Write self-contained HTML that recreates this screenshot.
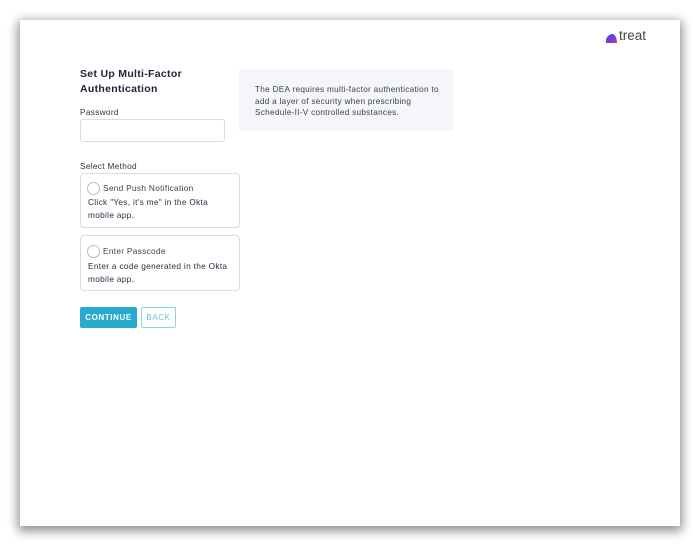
<!DOCTYPE html>
<html><head><style>
body{margin:0;width:700px;height:546px;background:#fff;position:relative;overflow:hidden;font-family:"Liberation Sans",sans-serif;color:#2a2f45}
.panel{position:absolute;left:20px;top:20px;width:660px;height:506px;background:#fff;box-shadow:0 3px 10px 2px rgba(0,0,0,.45)}
.a{position:absolute}
h1{position:absolute;left:80px;top:67px;margin:0;font-size:10.5px;line-height:15px;font-weight:bold;color:#1e2235;width:140px;letter-spacing:.3px}
.lbl{font-size:8.3px;color:#333;letter-spacing:.3px}
.inp{left:80px;top:119px;width:143px;height:21px;border:1px solid #d8dbe0;border-radius:3px}
.card{left:80px;width:158px;border:1px solid #d8dbe0;border-radius:4px;font-size:8.3px;line-height:13px;color:#2a2f45;letter-spacing:.3px}
.radio{position:absolute;left:6px;width:11px;height:11px;border:1px solid #bbb;border-radius:50%}
.info{left:239px;top:69px;width:215px;height:62px;background:#f5f6fa;border-radius:2px;font-size:8.2px;line-height:11.5px;color:#3b4050;letter-spacing:.3px}
.btn{top:307px;height:21px;font-size:8px;font-weight:bold;letter-spacing:.6px;line-height:21px;text-align:center;border-radius:2px}
</style></head><body>
<div class="panel"></div>
<div class="a" style="left:605px;top:32px;width:13px;height:12px">
<svg width="13" height="12" viewBox="0 0 13 12"><defs><linearGradient id="g" x1="0" y1="0" x2="1" y2="1"><stop offset="0" stop-color="#2f5cd6"/><stop offset="0.6" stop-color="#7a3ad9"/><stop offset="1" stop-color="#e0368f"/></linearGradient></defs><path d="M1 10 C0 5 4 1 7 1 C10 1 12 5 12 10 Z" fill="url(#g)"/></svg></div>
<div class="a" style="left:619px;top:28px;font-size:13.5px;color:#444">treat</div>
<h1>Set Up Multi-Factor Authentication</h1>
<div class="a lbl" style="left:80px;top:107px">Password</div>
<div class="a inp"></div>
<div class="a lbl" style="left:80px;top:161px">Select Method</div>
<div class="a card" style="top:173px;height:53px">
<div class="radio" style="top:8px"></div>
<div class="a" style="left:22px;top:8px;color:#444">Send Push Notification</div>
<div class="a" style="left:7px;top:22px;width:140px">Click "Yes, it's me" in the Okta mobile app.</div>
</div>
<div class="a card" style="top:235px;height:54px">
<div class="radio" style="top:9px"></div>
<div class="a" style="left:22px;top:9px;color:#444">Enter Passcode</div>
<div class="a" style="left:7px;top:24px;width:150px">Enter a code generated in the Okta mobile app.</div>
</div>
<div class="a btn" style="left:80px;width:57px;background:#27aacb;color:#fff">CONTINUE</div>
<div class="a btn" style="left:141px;width:33px;height:19px;line-height:19px;border:1px solid #8fd3e3;color:#6cc2d8;font-weight:normal">BACK</div>
<div class="a info"><div style="padding:15px 0 0 16px;width:185px">The DEA requires multi-factor authentication to add a layer of security when prescribing Schedule-II-V controlled substances.</div></div>
</body></html>
